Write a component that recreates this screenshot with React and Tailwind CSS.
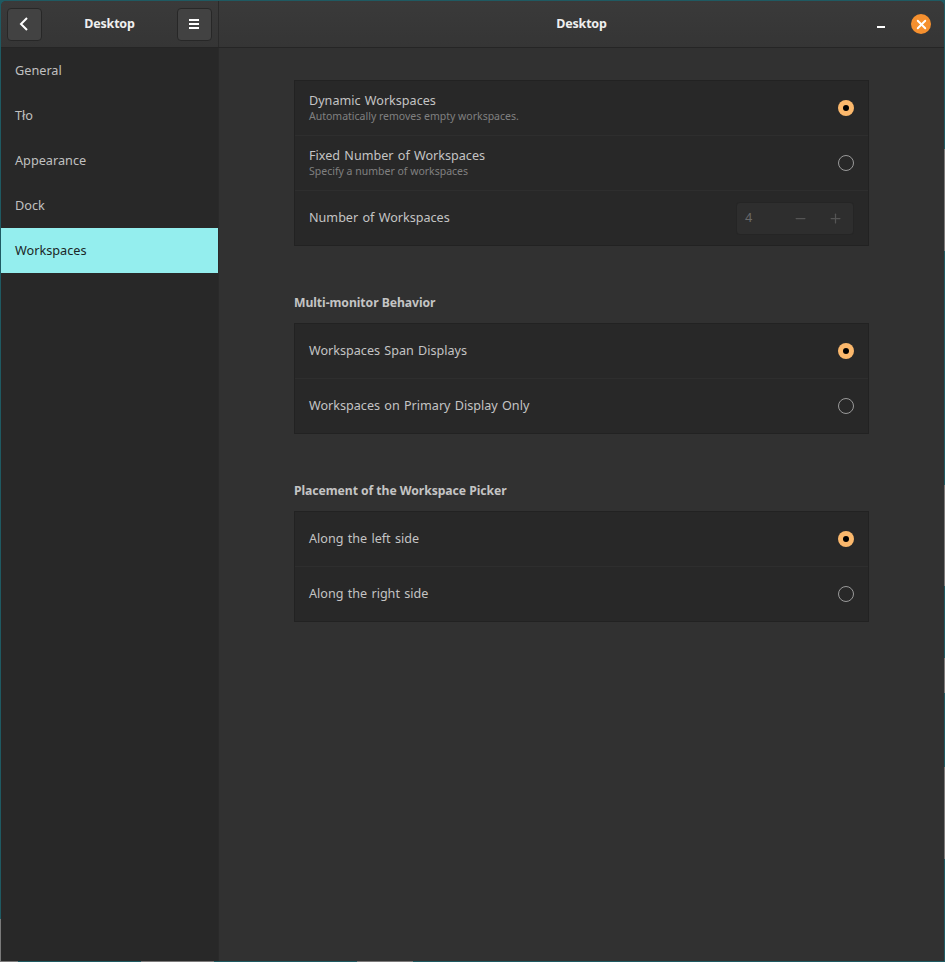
import { Minus, Plus, X } from 'lucide-react'

const NAV_ITEMS = ['General', 'Tło', 'Appearance', 'Dock', 'Workspaces']

const Radio = ({ checked }) =>
  checked ? (
    <span className="flex h-4 w-4 items-center justify-center rounded-full bg-[#fbb86c]">
      <span className="h-[6px] w-[6px] rounded-full bg-black" />
    </span>
  ) : (
    <span className="h-4 w-4 rounded-full border border-[#9a9a9a]" />
  )

const Row = ({ title, subtitle, last, children }) => (
  <div className={`flex items-center justify-between pl-[14px] pr-[14px] ${last ? 'h-[54px]' : 'h-[55px] border-b border-[#2e2e2e]'}`}>
    <div className="-mt-px flex flex-col">
      <span className="text-[12.6px] leading-[15px] text-[#c4c4c4] [word-spacing:1px]">{title}</span>
      {subtitle && (
        <span className="pt-px text-[10.5px] leading-[14px] text-[#808080]">{subtitle}</span>
      )}
    </div>
    {children}
  </div>
)

const Section = ({ title, children }) => (
  <div className="mb-[48px]">
    {title && (
      <h2 className="mb-[12px] pt-px text-[12.2px] font-bold leading-[16px] tracking-[-0.06px] text-[#c4c4c4]">{title}</h2>
    )}
    <div className="border border-[#222222] bg-[#282828]">{children}</div>
  </div>
)

export default function App() {
  return (
    <div className="relative h-[962px] w-[945px] overflow-hidden bg-[#1f5a62] p-px font-['Noto_Sans',sans-serif]">
      {/* bits of wallpaper showing round the window edge */}
      <span className="absolute left-0 top-[919px] h-[43px] w-px bg-[#7a7a7a]" />
      <span className="absolute right-0 top-[149px] h-[102px] w-px bg-[#7a7a7a]" />
      <span className="absolute right-0 top-[485px] h-[101px] w-px bg-[#7a7a7a]" />
      <span className="absolute right-0 top-[658px] h-[35px] w-px bg-[#7a7a7a]" />
      <span className="absolute right-0 top-[767px] h-[92px] w-px bg-[#7a7a7a]" />
      <span className="absolute bottom-0 left-0 h-px w-[18px] bg-[#7a7a7a]" />
      <span className="absolute bottom-0 left-[141px] h-px w-[73px] bg-[#7a7a7a]" />
      <span className="absolute bottom-0 left-[357px] h-px w-[56px] bg-[#7a7a7a]" />

      <div className="relative flex h-full flex-col overflow-hidden rounded-t-[5px] bg-[#313131]">
        <header className="flex h-[47px] shrink-0 border-b border-[#252525] bg-gradient-to-b from-[#3a3a3a] to-[#353535]">
          <div className="flex w-[218px] items-center justify-between border-r border-[#2a2a2a] pl-[6px] pr-[6px]">
            <button className="flex h-[33px] w-[35px] items-center justify-center rounded-[4px] border border-[#272727] bg-[#424242] text-white">
              <svg width="10" height="14" viewBox="0 0 10 14" fill="none" stroke="currentColor" strokeWidth="2" className="mr-[2px]">
                <path d="M8 1 L2 7 L8 13" />
              </svg>
            </button>
            <span className="text-[12.5px] font-bold tracking-[-0.2px] text-[#efefef]">Desktop</span>
            <button className="flex h-[33px] w-[35px] items-center justify-center rounded-[4px] border border-[#272727] bg-[#424242] text-white">
              <svg width="10" height="10" viewBox="0 0 10 10" fill="currentColor">
                <rect x="0" y="0" width="10" height="2" />
                <rect x="0" y="4" width="10" height="2" />
                <rect x="0" y="8" width="10" height="2" />
              </svg>
            </button>
          </div>
          <div className="relative flex flex-1 items-center justify-center">
            <span className="text-[12.5px] font-bold tracking-[-0.2px] text-[#efefef]">Desktop</span>
            <span className="absolute left-[658px] top-[25px] h-[2px] w-2 bg-white" />
            <span className="absolute right-[13px] top-[13px] flex h-5 w-5 items-center justify-center rounded-full bg-[#f6902f] text-white">
              <X size={15} strokeWidth={3} />
            </span>
          </div>
        </header>
        <div className="flex min-h-0 flex-1">
          <nav className="w-[218px] shrink-0 border-r border-[#2a2a2a] bg-[#282828]">
            {NAV_ITEMS.map(item => (
              <div
                key={item}
                className={`flex h-[45px] items-center pl-[14px] text-[12.7px] ${
                  item === 'Workspaces' ? 'bg-[#94eeee] text-[#1b2626]' : 'text-[#c0c0c0]'
                }`}
              >
                {item}
              </div>
            ))}
          </nav>
          <main className="flex-1 pl-[75px] pr-[75px] pt-[32px]">
            <Section>
              <Row title="Dynamic Workspaces" subtitle="Automatically removes empty workspaces.">
                <Radio checked />
              </Row>
              <Row title="Fixed Number of Workspaces" subtitle="Specify a number of workspaces">
                <Radio />
              </Row>
              <Row title="Number of Workspaces" last>
                <div className="flex h-[33px] w-[118px] items-center rounded-[4px] border border-[#252525] bg-[#2e2e2e] text-[#555555]">
                  <span className="flex-1 pl-2 text-[12.7px] text-[#6a6a6a]">4</span>
                  <Minus size={15} className="mr-5" />
                  <Plus size={15} className="mr-[10px]" />
                </div>
              </Row>
            </Section>
            <Section title="Multi-monitor Behavior">
              <Row title="Workspaces Span Displays">
                <Radio checked />
              </Row>
              <Row title="Workspaces on Primary Display Only" last>
                <Radio />
              </Row>
            </Section>
            <Section title="Placement of the Workspace Picker">
              <Row title="Along the left side">
                <Radio checked />
              </Row>
              <Row title="Along the right side" last>
                <Radio />
              </Row>
            </Section>
          </main>
        </div>
      </div>
    </div>
  )
}
